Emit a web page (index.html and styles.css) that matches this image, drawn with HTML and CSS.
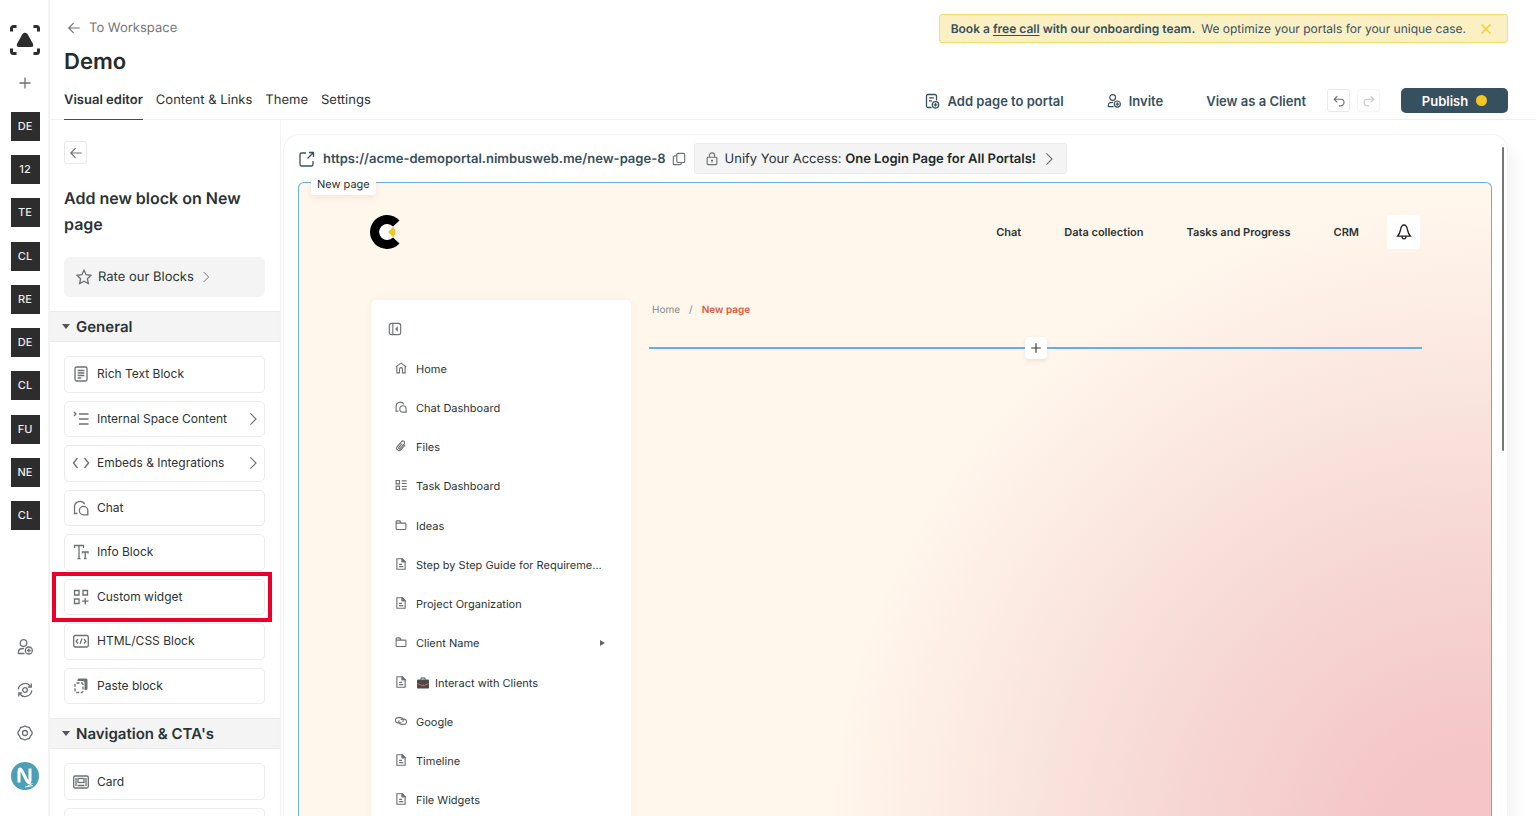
FILE: index.html
```
<!DOCTYPE html>
<html lang="en">

<head>
    <meta charset="utf-8">
    <title>Demo - Visual editor</title>
    <link rel="stylesheet" href="styles.css">
</head>

<body>
    <!-- shared icons -->
    <svg class="sprite" xmlns="http://www.w3.org/2000/svg">
        <symbol id="i-back" viewBox="0 0 16 16"><path d="M14.500 8H2M7.500 2.500l-5.500 5.500 5.500 5.500"/></symbol>
        <symbol id="i-chevron" viewBox="0 0 16 16"><path d="M5 1.500 11.500 8 5 14.500"/></symbol>
        <symbol id="i-plus" viewBox="0 0 16 16"><path d="M8 2.500v11M2.500 8h11"/></symbol>
        <symbol id="i-chat" viewBox="0 0 16 16"><path d="M4.500 13.500H1.500V7a5.500 5.500 0 0 1 10.300-2.700"/><path d="M14.800 14.800h-4.300a4.200 4.200 0 1 1 4.300-4.200z"/></symbol>
        <symbol id="i-doc" viewBox="0 0 16 16"><path d="M9.500 1H2.500v14h11V5zM9.500 1v4h4M5.500 8.500h4M5.500 11.500h5.500"/><path class="solid" d="M9.500 1v4h4z"/></symbol>
        <symbol id="i-folder" viewBox="0 0 16 16"><path d="M1.500 5.500v7.500a1 1 0 0 0 1 1h11a1 1 0 0 0 1-1V6.500a1 1 0 0 0-1-1zV3.500a1 1 0 0 1 1-1h4l1.500 3"/></symbol>
        <symbol id="i-user" viewBox="0 0 16 16"><circle cx="6.500" cy="4" r="3.300"/><path d="M7.500 14.500h-6v-1.700c0-2.200 1.800-3.300 4.500-3.300h1"/><circle cx="11.800" cy="11.500" r="3.500"/><path d="M11.800 9.500v4M9.800 11.500h4"/></symbol>
    </svg>

    <div class="app">
        <nav class="rail">
            <svg class="brand" viewBox="0 0 30 30">
                <path d="M1.500 6.500V3.500a2 2 0 0 1 2-2h3M23.500 1.500h3a2 2 0 0 1 2 2v3M28.500 23.500v3a2 2 0 0 1-2 2h-3M6.500 28.500h-3a2 2 0 0 1-2-2v-3"/>
                <path class="solid" d="M12.500 9q2.500-2.500 5 0l5.300 9.500q1.500 3.500-2 3.500H9.200q-3.500 0-2-3.500z"/>
            </svg>
            <button class="rail-add" aria-label="Add"><svg class="icon"><use href="#i-plus"/></svg></button>
            <div class="spaces">
                <a href="#">DE</a>
                <a href="#">12</a>
                <a href="#">TE</a>
                <a href="#">CL</a>
                <a href="#">RE</a>
                <a href="#">DE</a>
                <a href="#">CL</a>
                <a href="#">FU</a>
                <a href="#">NE</a>
                <a href="#">CL</a>
            </div>
            <div class="rail-bottom">
                <button aria-label="Add member"><svg class="icon"><use href="#i-user"/></svg></button>
                <button aria-label="Sync">
                    <svg class="icon" viewBox="0 0 16 16"><circle cx="8" cy="8" r="2.300"/><path d="M1.200 7.500a6.800 6.800 0 0 1 12-3.500M14.300 1.500v3.500h-3.500M14.800 8.500a6.800 6.800 0 0 1-12 3.500M1.700 14.500V11h3.500"/></svg>
                </button>
                <button aria-label="Settings">
                    <svg class="icon" viewBox="0 0 16 16"><path d="M6 2 8 1l2 1 2.500.500.900 2.400L15 7v2l-1.600 2.100-.900 2.400-2.500.500-2 1-2-1-2.500-.500-.900-2.400L1 9V7l1.600-2.100.900-2.400z"/><circle cx="8" cy="8" r="2.500"/></svg>
                </button>
                <a class="avatar" href="#" aria-label="Profile">
                    <svg viewBox="0 0 28 28"><path d="M8 20.500V10Q8.500 4.500 11 9l5 10q3 4 3-1V6.500"/><path class="thin" d="M14 25l8-1.500M16.500 24l5-2.500"/></svg>
                </a>
            </div>
        </nav>

        <div class="main">
            <header class="header">
                <div class="header-left">
                    <a class="to-workspace" href="#"><svg class="icon"><use href="#i-back"/></svg>To Workspace</a>
                    <h1>Demo</h1>
                    <div class="tabs">
                        <a class="active" href="#">Visual editor</a>
                        <a href="#">Content &amp; Links</a>
                        <a href="#">Theme</a>
                        <a href="#">Settings</a>
                    </div>
                </div>
                <div class="header-right">
                    <div class="notice">
                        <b>Book a <a href="#">free call</a> with our onboarding team.</b>
                        <span>We optimize your portals for your unique case.</span>
                        <button aria-label="Close"><svg viewBox="0 0 12 12"><path d="M1.500 1.500l9 9M10.500 1.500l-9 9"/></svg></button>
                    </div>
                    <div class="actions">
                        <button class="action add-page">
                            <svg class="icon" viewBox="0 0 16 16"><path d="M7.500 14.500H4a1.500 1.500 0 0 1-1.500-1.500V3A1.500 1.500 0 0 1 4 1.500h7A1.500 1.500 0 0 1 12.500 3v4.500M5 4.800h5M5 7.800h3"/><circle cx="11.500" cy="11.800" r="3.200"/><path d="M11.500 10v3.600M9.700 11.800h3.600"/></svg>Add page to portal
                        </button>
                        <button class="action invite"><svg class="icon"><use href="#i-user"/></svg>Invite</button>
                        <button class="action view-as">View as a Client</button>
                        <button class="square" aria-label="Undo"><svg class="icon" viewBox="0 0 16 16"><path d="M6 2.500 2.500 6 6 9.500M2.500 6h7.500a3.500 3.500 0 0 1 0 7.500H8"/></svg></button>
                        <button class="square redo" aria-label="Redo" disabled><svg class="icon" viewBox="0 0 16 16"><path d="M10 2.500 13.500 6 10 9.500M13.500 6H6a3.500 3.500 0 0 0 0 7.500h2"/></svg></button>
                        <button class="publish">Publish <i></i></button>
                    </div>
                </div>
            </header>

            <div class="workspace">
                <aside class="blocks">
                    <div class="blocks-head">
                        <button class="square" aria-label="Back"><svg class="icon"><use href="#i-back"/></svg></button>
                        <h2>Add new block on New page</h2>
                        <a class="rate" href="#">
                            <svg class="icon" viewBox="0 0 16 16"><path d="M8 1.200l2.100 4.500 4.900.600-3.600 3.400.9 4.900L8 12.200l-4.300 2.400.9-4.900L1 6.300l4.900-.600z"/></svg>
                            Rate our Blocks
                            <svg class="icon arrow"><use href="#i-chevron"/></svg>
                        </a>
                    </div>

                    <h3>General</h3>
                    <div class="block-list general">
                        <button><svg class="icon" viewBox="0 0 16 16"><rect x="2" y="1" width="12" height="14" rx="1.500"/><path d="M4.700 4.500h6.600M4.700 7h6.600M4.700 9.500h6.600M4.700 12h3.600"/></svg>Rich Text Block</button>
                        <button><svg class="icon" viewBox="0 0 16 16"><path d="M6 3h9.500M6 8h9.500M6 13h9.500M1 1l2 2-2 2"/></svg>Internal Space Content<svg class="icon more"><use href="#i-chevron"/></svg></button>
                        <button><svg class="icon" viewBox="0 0 16 16"><path d="M4.500 3 .500 8l4 5M11.500 3l4 5-4 5"/></svg>Embeds &amp; Integrations<svg class="icon more"><use href="#i-chevron"/></svg></button>
                        <button><svg class="icon"><use href="#i-chat"/></svg>Chat</button>
                        <button><svg class="icon" viewBox="0 0 16 16"><path d="M1.500 4V1.500h9V4M6 1.500v13M4.500 14.500h3M9.500 9.500V8h5.500v1.500M12.200 8v6.500M11 14.500h2.500"/></svg>Info Block</button>
                        <button class="highlighted"><svg class="icon" viewBox="0 0 16 16"><path d="M1.500 1.500h4.500V6H1.500zM10 1.500h4.500V6H10zM1.500 10h4.500v4.500H1.500zM12.200 9v6.500M9 12.200h6.500"/></svg>Custom widget</button>
                        <button><svg class="icon" viewBox="0 0 16 16"><rect x=".7" y="2.500" width="14.600" height="11.500" rx="1.500"/><path d="M5 6 3.200 8.200 5 10.500M11 6l1.800 2.200L11 10.500M9 5.500l-2 5.500"/></svg>HTML/CSS Block</button>
                        <button><svg class="icon" viewBox="0 0 16 16"><path class="solid" d="M4.500 3V2a1.500 1.500 0 0 1 1.500-1.500h7A1.500 1.500 0 0 1 14.500 2v8.500A1.500 1.500 0 0 1 13 12h-1.500V4.500a1.500 1.500 0 0 0-1.500-1.500z"/><rect x="2" y="5" width="8" height="9.500" rx="1.500" stroke-dasharray="3 1.500"/></svg>Paste block</button>
                    </div>

                    <h3>Navigation &amp; CTA's</h3>
                    <div class="block-list">
                        <button><svg class="icon" viewBox="0 0 16 16"><rect x=".7" y="2" width="14.600" height="12" rx="1.500"/><rect x="5" y="4.500" width="6" height="4"/><path d="M4.500 11.500h7M3 4v8M13 4v8"/></svg>Card</button>
                        <button aria-label="Button"></button>
                    </div>
                </aside>

                <section class="editor">
                    <div class="url-bar">
                        <svg class="icon open" viewBox="0 0 16 16"><path d="M7 2H2.500A1.500 1.500 0 0 0 1 3.500v10A1.500 1.500 0 0 0 2.500 15h10a1.500 1.500 0 0 0 1.500-1.500V10M10 1.500h4.500V6M14.500 1.500 8.500 7.500"/></svg>
                        <a class="url" href="#">https://acme-demoportal.nimbusweb.me/new-page-8</a>
                        <button class="copy" aria-label="Copy link"><svg class="icon" viewBox="0 0 16 16"><rect x="5.500" y="1.500" width="9" height="10.500" rx="1.500"/><path d="M5.500 4.500H3A1.500 1.500 0 0 0 1.500 6v7A1.500 1.500 0 0 0 3 14.500h6a1.500 1.500 0 0 0 1.500-1.500v-1"/></svg></button>
                        <a class="unify" href="#">
                            <svg class="icon lock" viewBox="0 0 16 16"><rect x="2.500" y="6" width="11" height="8.500" rx="1"/><path d="M5 6V4a3 3 0 0 1 6 0v2M8 9v3M6.800 9.500h2.400"/></svg>
                            <span>Unify Your Access: <b>One Login Page for All Portals!</b></span>
                            <svg class="icon"><use href="#i-chevron"/></svg>
                        </a>
                    </div>

                    <div class="page">
                        <span class="page-label">New page</span>
                        <div class="page-nav">
                            <svg class="site-logo" viewBox="0 0 30 34">
                                <path class="letter" d="M29.500 5.500A17 17 0 1 0 29.500 28.500L23 22.500A8 8 0 1 1 23 11.500z"/>
                                <circle class="hole" cx="17" cy="17" r="7.500"/>
                                <path class="dot" d="M18 17l5-5q2.500 2 2.500 5t-2.500 5z"/>
                            </svg>
                            <a href="#">Chat</a>
                            <a href="#">Data collection</a>
                            <a href="#">Tasks and Progress</a>
                            <a href="#">CRM</a>
                            <button aria-label="Notifications"><svg class="icon" viewBox="0 0 16 16"><path d="M8 1C6 1 5 3 4.500 6 4 8.500 3 10.500 1.500 12.200h13C13 10.500 12 8.500 11.500 6 11 3 10 1 8 1zM6 12.500c0 1.500.8 2.300 2 2.300s2-.8 2-2.300"/></svg></button>
                        </div>

                        <div class="page-body">
                            <nav class="site-menu">
                                <button aria-label="Collapse menu"><svg class="icon" viewBox="0 0 16 16"><rect x="1.500" y="1.500" width="13" height="13" rx="2.500"/><path d="M5.500 1.500v13M10.500 6.500 9 8l1.500 1.500z"/></svg></button>
                                <div class="menu-items">
                                    <a href="#"><svg class="icon" viewBox="0 0 16 16"><path d="M1 6.500 8 1.500l7 5M2.500 5.500v9h3.500v-5a2 2 0 0 1 4 0v5h3.500v-9"/></svg>Home</a>
                                    <a href="#"><svg class="icon"><use href="#i-chat"/></svg>Chat Dashboard</a>
                                    <a href="#"><svg class="icon" viewBox="0 0 16 16"><path d="M13.500 6.500 8 13a3.300 3.300 0 0 1-5-4.300l5.700-6.500a2.300 2.300 0 0 1 3.600 3L7 11.200a1.200 1.200 0 0 1-1.900-1.500L9.500 4.700"/></svg>Files</a>
                                    <a href="#"><svg class="icon" viewBox="0 0 16 16"><path d="M1.500 2h4.500v4.500H1.500zM1.500 9.500h4.500V14H1.500zM9 2.500h6.500M9 6h6.500M9 10h6.500M9 13.500h6.500"/></svg>Task Dashboard</a>
                                    <a href="#"><svg class="icon"><use href="#i-folder"/></svg>Ideas</a>
                                    <a href="#"><svg class="icon"><use href="#i-doc"/></svg>Step by Step Guide for Requireme...</a>
                                    <a href="#"><svg class="icon"><use href="#i-doc"/></svg>Project Organization</a>
                                    <a class="has-children" href="#"><svg class="icon"><use href="#i-folder"/></svg>Client Name</a>
                                    <a href="#"><svg class="icon"><use href="#i-doc"/></svg><svg class="briefcase" viewBox="0 0 14 14"><path class="handle" d="M5 3.500V2h4v1.500"/><rect x="1" y="3.500" width="12" height="9" rx="1"/><path class="clasp" d="M1 7.500l5 2h2l5-2M7 8.500v2"/></svg>Interact with Clients</a>
                                    <a href="#"><svg class="icon" viewBox="0 0 16 16"><path d="M8.500 9.800A3.800 3.800 0 0 1 6 10.500H4a3.500 3.500 0 0 1 0-7h3.500a3.500 3.500 0 0 1 2.800 5.500M7.500 6.200A3.800 3.800 0 0 1 10 5.500h2a3.500 3.500 0 0 1 0 7H8.500A3.500 3.500 0 0 1 5.700 7"/></svg>Google</a>
                                    <a href="#"><svg class="icon"><use href="#i-doc"/></svg>Timeline</a>
                                    <a href="#"><svg class="icon"><use href="#i-doc"/></svg>File Widgets</a>
                                </div>
                            </nav>
                            <div class="page-content">
                                <div class="breadcrumb"><a href="#">Home</a><span>/</span><b>New page</b></div>
                                <div class="insert-line">
                                    <button aria-label="Insert block"><svg class="icon"><use href="#i-plus"/></svg></button>
                                </div>
                            </div>
                        </div>
                    </div>
                    <div class="scroll-thumb"></div>
                </section>
            </div>
        </div>
    </div>
</body>

</html>
```

FILE: styles.css
```
* {
    box-sizing: border-box;
}

body {
    margin: 0;
    background-color: white;
    color: #2b3336;
    font-family: Inter, "Liberation Sans", sans-serif;
    font-size: 13px;
    line-height: 20px;
    text-rendering: geometricPrecision;
}

a {
    color: inherit;
    text-decoration: none;
}

button {
    font: inherit;
    color: inherit;
    padding: 0;
    border: none;
    background: none;
}

h1,
h2,
h3 {
    margin: 0;
}

b {
    font-weight: 600;
}

.sprite {
    display: none;
}

.icon {
    width: 16px;
    height: 16px;
    flex: none;
    fill: none;
    stroke: #6c7173;
    stroke-width: 1.3;
}

.icon .solid {
    fill: #6c7173;
    stroke: none;
}

.app {
    display: flex;
    height: 100vh;
    overflow: hidden;
}

/* left rail */
.rail {
    width: 50px;
    flex: none;
    display: flex;
    flex-direction: column;
    align-items: center;
    padding: 25px 0;
    border-right: 2px solid #f3f3f3;
}

.brand {
    width: 30px;
    height: 30px;
    margin-left: 2px;
    fill: none;
    stroke: #2d2d2d;
    stroke-width: 3;
}

.brand .solid {
    fill: #2d2d2d;
    stroke: none;
}

.rail-add {
    height: 16px;
    margin: 20px 0 21px 2px;
}

.rail button,
.rail-bottom a {
    display: flex;
}

.spaces {
    display: flex;
    flex-direction: column;
    justify-content: space-between;
    height: 418px;
    margin-left: 2px;
}

.spaces a {
    width: 29px;
    height: 29px;
    background-color: #2d2d2d;
    color: #eee;
    font-size: 11px;
    font-weight: 500;
    line-height: 29px;
    text-align: center;
}

.rail-bottom {
    display: flex;
    flex-direction: column;
    align-items: center;
    gap: 27px;
    margin: auto 0 1px 2px;
}

.avatar {
    width: 28px;
    height: 28px;
    margin-top: -6px;
    border-radius: 50%;
    background-color: #4b9fb6;
}

.avatar svg {
    fill: none;
    stroke: white;
    stroke-width: 3;
}

.avatar .thin {
    stroke-width: 1;
}

.main {
    flex: 1;
    min-width: 0;
    display: flex;
    flex-direction: column;
}

/* header */
.header {
    display: flex;
    justify-content: space-between;
    height: 120px;
    flex: none;
    padding: 14px 28px 0 14px;
    border-bottom: 1px solid #f0f0f0;
}

.to-workspace {
    display: flex;
    align-items: center;
    gap: 8px;
    padding: 4px 0 0 3px;
    color: #777;
}

.to-workspace .icon,
.blocks-head .square .icon {
    width: 14px;
    height: 14px;
}

h1 {
    margin-top: 11px;
    font-size: 22px;
    font-weight: 600;
    line-height: 26px;
    color: #262c2e;
}

.tabs {
    display: flex;
    gap: 13px;
    margin-top: 15px;
}

.tabs a {
    height: 30px;
}

.tabs .active {
    font-weight: 600;
    border-bottom: 1px solid #37505f;
}

.header-right {
    display: flex;
    flex-direction: column;
    align-items: flex-end;
    justify-content: space-between;
    padding-bottom: 6px;
}

.notice {
    display: flex;
    align-items: center;
    gap: 6px;
    height: 29px;
    padding: 0 15px 0 11px;
    border: 1px solid #f8dc66;
    border-radius: 3px;
    background-color: #fbf0c4;
    color: #37505f;
    font-size: 12px;
}

.notice a {
    text-decoration: underline;
    text-underline-offset: 2px;
}

.notice button {
    display: flex;
    margin-left: 8px;
}

.notice svg {
    width: 12px;
    height: 12px;
    stroke: #f3cf31;
    stroke-width: 1.5;
}

.actions {
    display: flex;
    align-items: center;
}

.action {
    display: flex;
    align-items: center;
    gap: 8px;
    color: #37505f;
    font-weight: 600;
}

.action .icon {
    stroke: #37505f;
}

.add-page,
.view-as {
    margin-right: 21px;
}

.invite {
    margin: 0 43px 0 22px;
}

.invite .icon {
    width: 14px;
    height: 14px;
}

.square {
    display: flex;
    align-items: center;
    justify-content: center;
    width: 23px;
    height: 23px;
    border: 1px solid #e9e9e9;
    border-radius: 3px;
}

.square .icon {
    width: 14px;
    height: 14px;
}

.redo {
    margin: 0 21px 0 7px;
    opacity: 0.4;
}

.publish {
    display: flex;
    align-items: center;
    justify-content: center;
    gap: 8px;
    width: 107px;
    height: 25px;
    border-radius: 5px;
    background-color: #37505f;
    color: white;
    font-weight: 600;
}

.publish i {
    width: 11px;
    height: 11px;
    border-radius: 50%;
    background-color: #f2c827;
}

.workspace {
    flex: 1;
    min-height: 0;
    display: flex;
    gap: 2px;
    padding-right: 28px;
}

/* block list */
.blocks {
    width: 231px;
    flex: none;
    overflow: hidden;
    border-right: 1px solid #f3f3f3;
}

.blocks-head {
    padding: 21px 15px 14px 14px;
}

h2 {
    margin: 21px 0 20px;
    font-size: 16px;
    font-weight: 600;
    line-height: 26px;
}

.rate {
    display: flex;
    align-items: center;
    gap: 6px;
    height: 40px;
    padding-left: 12px;
    border-radius: 6px;
    background-color: #f4f4f4;
}

.rate .arrow {
    width: 12px;
    height: 12px;
}

h3 {
    display: flex;
    align-items: center;
    gap: 6px;
    height: 31px;
    padding-left: 12px;
    border: solid #ececec;
    border-width: 1px 0;
    background-color: #f4f4f4;
    font-size: 15px;
    font-weight: 600;
}

h3::before {
    content: "";
    border: 4px solid transparent;
    border-top: 5px solid #555;
    border-bottom: none;
}

.block-list {
    display: grid;
    gap: 8px;
    grid-auto-rows: 37px;
    padding: 14px 15px 14px 14px;
}

.block-list.general {
    height: 376px;
    grid-auto-rows: 1fr;
}

.block-list button {
    position: relative;
    display: flex;
    align-items: center;
    gap: 8px;
    padding: 0 4px 0 8px;
    border: 1px solid #ececec;
    border-radius: 5px;
    font-size: 12px;
    text-align: left;
}

.block-list .more {
    width: 14px;
    height: 14px;
    margin-left: auto;
}

.highlighted::after {
    content: "";
    position: absolute;
    inset: -8px -8px -8px -13px;
    border: 4px solid #ea0029;
}

/* editor */
.editor {
    position: relative;
    flex: 1;
    min-width: 0;
    display: flex;
    flex-direction: column;
    margin-top: 14px;
    padding: 0 15px 0 14px;
    border: 1px solid #f3f3f3;
    border-bottom: none;
    border-radius: 16px 16px 0 0;
    box-shadow: 6px 12px 16px rgba(0, 0, 0, 0.05);
}

.url-bar {
    display: flex;
    align-items: center;
    height: 47px;
    padding-left: 1px;
}

.url {
    margin: 0 6px 0 8px;
    color: #37505f;
    font-weight: 600;
}

.open {
    stroke: #37505f;
}

.copy {
    display: flex;
}

.copy .icon {
    width: 14px;
    height: 14px;
}

.unify {
    display: flex;
    align-items: center;
    gap: 6px;
    height: 31px;
    margin-left: 8px;
    padding: 0 10px;
    border: 1px solid #ececec;
    border-radius: 3px;
    background-color: #f4f4f4;
}

.unify b {
    color: #22282a;
}

.unify .icon {
    width: 14px;
    height: 14px;
}

.page {
    position: relative;
    flex: 1;
    min-height: 0;
    padding: 32px 69px 0 71px;
    border: 1px solid #64aeea;
    border-bottom: none;
    border-radius: 6px 6px 0 0;
    background: radial-gradient(circle at 99% 106%, #f5c4c7 0, #f5c7c9 120px, #f6d6d3 300px, #fff6ec 650px);
}

.page-label {
    position: absolute;
    top: -10px;
    left: 12px;
    padding: 1px 6px;
    border-radius: 3px;
    background-color: white;
    box-shadow: 0 3px 5px rgba(200, 90, 70, 0.1);
    font-size: 11px;
}

.page-nav {
    display: flex;
    align-items: center;
    gap: 43px;
    font-size: 11px;
    font-weight: 600;
}

.site-logo {
    width: 30px;
    height: 34px;
    margin-right: auto;
}

.hole {
    fill: white;
}

.dot {
    fill: #eec52a;
}

.page-nav button {
    display: flex;
    align-items: center;
    justify-content: center;
    width: 33px;
    height: 34px;
    margin: 0 2px 0 -15px;
    border-radius: 4px;
    background-color: white;
}

.page-nav .icon {
    stroke: #222;
}

.page-body {
    display: flex;
    gap: 18px;
    margin-top: 51px;
    padding-left: 1px;
}

.site-menu {
    width: 260px;
    flex: none;
    padding: 20px 24px;
    border-radius: 5px 5px 0 0;
    background-color: white;
    box-shadow: 0 0 6px rgba(200, 90, 70, 0.06);
}

.site-menu button {
    display: flex;
    height: 29px;
    margin-left: -7px;
    padding-top: 2px;
}

.site-menu button .icon {
    width: 14px;
    height: 14px;
}

.menu-items {
    display: grid;
    grid-template-columns: minmax(0, 1fr);
    grid-auto-rows: 1fr;
    height: 471px;
}

.menu-items a {
    display: flex;
    align-items: center;
    gap: 9px;
    font-size: 11px;
    white-space: nowrap;
}

.menu-items .icon {
    width: 12px;
    height: 12px;
    margin-bottom: 2px;
    stroke-width: 1.5;
}

.has-children::after {
    content: "";
    margin: 0 2px 0 auto;
    border: 3px solid transparent;
    border-left: 5px solid #666;
    border-right: none;
}

.briefcase {
    width: 14px;
    height: 14px;
    margin-right: -4px;
    fill: #4a4a4c;
}

.briefcase .handle,
.briefcase .clasp {
    fill: none;
    stroke: #4a4a4c;
}

.briefcase .clasp {
    stroke: #c4673a;
}

.page-content {
    flex: 1;
}

.breadcrumb {
    display: flex;
    gap: 9px;
    padding-left: 3px;
    font-size: 10px;
    color: #84888a;
}

.breadcrumb b {
    color: #e2583e;
}

.insert-line {
    display: flex;
    align-items: center;
    height: 22px;
    margin-top: 17px;
}

.insert-line::before,
.insert-line::after {
    content: "";
    flex: 1;
    height: 2px;
    background-color: #64aeea;
}

.insert-line button {
    display: flex;
    align-items: center;
    justify-content: center;
    width: 22px;
    height: 22px;
    border-radius: 4px;
    background-color: white;
    box-shadow: 0 2px 4px rgba(200, 90, 70, 0.15);
}

.insert-line .icon {
    width: 14px;
    height: 14px;
    stroke: #333;
}

.scroll-thumb {
    position: absolute;
    top: 12px;
    right: 3px;
    width: 2px;
    height: 304px;
    border-radius: 1px;
    background-color: #777;
}
```
